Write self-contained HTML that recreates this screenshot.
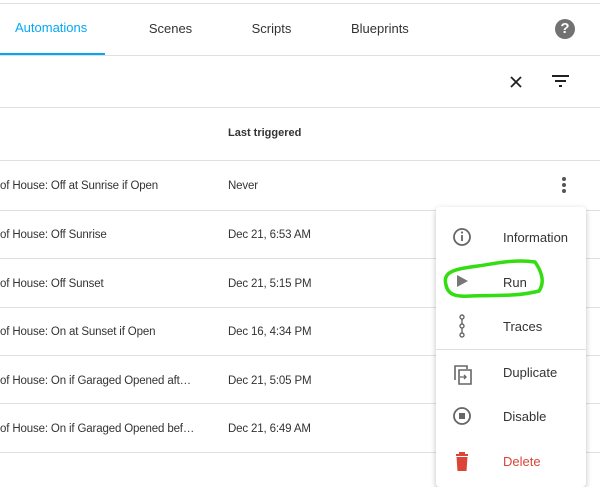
<!DOCTYPE html><html><head><style>
body{margin:0;width:600px;height:482px;overflow:hidden;background:#fff;font-family:"Liberation Sans",sans-serif;position:relative;color:#333}
.a{position:absolute}
.hl{position:absolute;left:0;width:600px;height:1px;background:#e0e0e0}
.t{position:absolute;font-size:11.5px;letter-spacing:-0.15px;white-space:nowrap}
.r{margin-top:2px}
.m{position:absolute;left:503px;font-size:13px;color:#333}
</style></head><body>
<div class="hl" style="top:3px"></div>
<div class="t" style="left:15px;top:20px;font-size:13px;letter-spacing:0;color:#03a9f4">Automations</div>
<div class="t" style="left:130px;top:21px;width:81px;text-align:center;font-size:13px;letter-spacing:0;color:#333">Scenes</div>
<div class="t" style="left:219px;top:21px;width:105px;text-align:center;font-size:13px;letter-spacing:0;color:#333">Scripts</div>
<div class="t" style="left:351px;top:21px;font-size:13px;letter-spacing:0;color:#333">Blueprints</div>
<div class="a" style="left:555px;top:19px;width:20px;height:20px;border-radius:50%;background:#727272;color:#fff;font-size:15px;font-weight:bold;text-align:center;line-height:20px">?</div>
<div class="a" style="left:0;top:53px;width:105px;height:2px;background:#03a9f4"></div>
<div class="hl" style="top:55px"></div>
<svg class="a" style="left:508px;top:74px" width="16" height="16"><path d="M3 3L13 13M13 3L3 13" stroke="#212121" stroke-width="1.8"/></svg>
<svg class="a" style="left:551px;top:73px" width="20" height="16"><path d="M1 3h17M4 8h11M8 13h3" stroke="#212121" stroke-width="2"/></svg>
<div class="hl" style="top:107px"></div>
<div class="t" style="left:228px;top:127px;font-size:11px;letter-spacing:0;font-weight:bold">Last triggered</div>
<div class="hl" style="top:160px"></div>
<div class="t r" style="left:0;top:178px">of House: Off at Sunrise if Open</div><div class="t r" style="left:228px;top:178px">Never</div>
<div class="a" style="left:562px;top:177px;width:4px;height:4px;border-radius:2px;background:#555;box-shadow:0 6px #555,0 12px #555"></div>
<div class="hl" style="top:210px"></div>
<div class="t r" style="left:0;top:227px">of House: Off Sunrise</div><div class="t r" style="left:228px;top:227px">Dec 21, 6:53 AM</div>
<div class="hl" style="top:258px"></div>
<div class="t r" style="left:0;top:276px">of House: Off Sunset</div><div class="t r" style="left:228px;top:276px">Dec 21, 5:15 PM</div>
<div class="hl" style="top:307px"></div>
<div class="t r" style="left:0;top:324px">of House: On at Sunset if Open</div><div class="t r" style="left:228px;top:324px">Dec 16, 4:34 PM</div>
<div class="hl" style="top:355px"></div>
<div class="t r" style="left:0;top:373px">of House: On if Garaged Opened aft…</div><div class="t r" style="left:228px;top:373px">Dec 21, 5:05 PM</div>
<div class="hl" style="top:403px"></div>
<div class="t r" style="left:0;top:421px">of House: On if Garaged Opened bef…</div><div class="t r" style="left:228px;top:421px">Dec 21, 6:49 AM</div>
<div class="hl" style="top:452px"></div>
<div class="a" style="left:436px;top:207px;width:150px;height:280px;background:#fff;border-radius:4px;box-shadow:0 2px 6px rgba(0,0,0,.25)"></div>
<svg class="a" style="left:436px;top:207px" width="150" height="275">
<circle cx="26" cy="30" r="8" fill="none" stroke="#666" stroke-width="1.8"/><path d="M26 28v6" stroke="#666" stroke-width="1.8"/><circle cx="26" cy="25.5" r="1.1" fill="#666"/>
<path d="M21 68l11 6-11 6z" fill="#777"/>
<circle cx="26" cy="110" r="2" fill="none" stroke="#666" stroke-width="1.4"/><circle cx="26" cy="119" r="2" fill="none" stroke="#666" stroke-width="1.4"/><circle cx="26" cy="128" r="2" fill="none" stroke="#666" stroke-width="1.4"/><path d="M26 112v5M26 121v5" stroke="#666" stroke-width="1.4"/>
<line x1="0" y1="142.5" x2="150" y2="142.5" stroke="#e0e0e0"/>
<path d="M19 173v-14h12v3M23 163h12v14h-12z" fill="none" stroke="#666" stroke-width="1.6"/><path d="M24 170h6M28 168l2 2-2 2" fill="none" stroke="#666" stroke-width="1.3"/>
<circle cx="26" cy="209" r="8" fill="none" stroke="#666" stroke-width="1.8"/><rect x="23" y="206" width="6" height="6" fill="#666"/>
<path d="M20 248h12M24 248v-2h4v2" stroke="#db4437" stroke-width="2" fill="none"/><path d="M20.5 250h11l-1 14h-9z" fill="#db4437"/>
<path d="M10 78C6 64 20 62 42 59C62 56 80 52 99 55C104 62 110 74 103 84C80 90 55 88 35 89C20 90 12 88 10 78Z" fill="none" stroke="#33dd11" stroke-width="3.5"/>
</svg>
<div class="m" style="top:230px">Information</div>
<div class="m" style="top:275px">Run</div>
<div class="m" style="top:319px">Traces</div>
<div class="m" style="top:365px">Duplicate</div>
<div class="m" style="top:409px">Disable</div>
<div class="m" style="top:454px;color:#db4437">Delete</div>
</body></html>
